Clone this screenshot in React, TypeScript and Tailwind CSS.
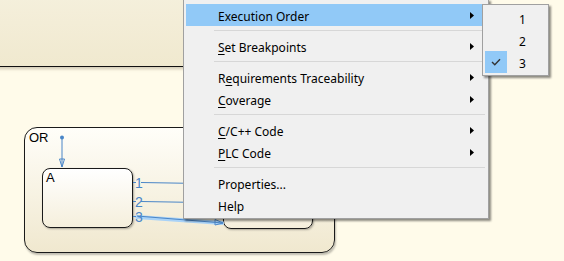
import React from "react";

const font = { fontFamily: '"Noto Sans", "Liberation Sans", sans-serif' };
const arial = { fontFamily: '"Liberation Sans", Arial, sans-serif' };

function Arrow() {
  return (
    <svg width="4" height="7" viewBox="0 0 4 7" className="block">
      <path d="M0 0 L4 3.5 L0 7 Z" fill="#000" />
    </svg>
  );
}

function Item({ children, sub, active }: { children: React.ReactNode; sub?: boolean; active?: boolean }) {
  return (
    <div
      className={`mx-[2px] h-[22px] flex items-center pl-[32px] pr-[12px] text-[12px] text-black ${active ? "bg-[#91c9f7]" : ""}`}
    >
      <span className="flex-1 leading-none mt-[3px]">{children}</span>
      {sub ? <Arrow /> : null}
    </div>
  );
}

function Sep() {
  return (
    <div className="py-[4px] pl-[30px] pr-[3px]">
      <div className="h-px bg-[#d7d7d7]" />
    </div>
  );
}

function U({ children }: { children: React.ReactNode }) {
  return <span className="underline underline-offset-2">{children}</span>;
}

function Label({ n, top }: { n: string; top: string }) {
  return (
    <div className={`absolute left-[135px] ${top} text-[14px] leading-[14px] text-[#4a86c8]`} style={arial}>
      {n}
    </div>
  );
}

export default function App() {
  return (
    <div className="relative w-[564px] h-[261px] overflow-hidden bg-[#fffbea]" style={font}>
      {/* top state box */}
      <div className="absolute left-[-20px] top-[-20px] w-[340px] h-[87px] border-b border-[#111] bg-gradient-to-b from-[#f6f1df] to-[#f0e9cf] shadow-[0_2px_3px_rgba(120,110,80,0.35)]" />

      {/* OR state */}
      <div className="absolute left-[24px] top-[127px] w-[311px] h-[126px] rounded-[13px] border border-[#1a1a1a] bg-gradient-to-b from-[#fffef9] to-[#f0e8cf] shadow-[1px_2px_2px_rgba(0,0,0,0.25)]">
        <div className="pl-[4px] pt-[3px] text-[13px] leading-[14px] text-black" style={arial}>
          OR
        </div>
      </div>

      {/* state A */}
      <div className="absolute left-[42px] top-[168px] w-[91px] h-[60px] rounded-[8px] border border-[#1a1a1a] bg-gradient-to-b from-[#ffffff] to-[#f5efdc] shadow-[1px_1px_2px_rgba(0,0,0,0.3)]">
        <div className="pl-[3px] pt-[2px] text-[13px] leading-[14px] text-black" style={arial}>
          A
        </div>
      </div>

      {/* state B */}
      <div className="absolute left-[223px] top-[170px] w-[90px] h-[59px] rounded-[8px] border border-[#1a1a1a] bg-gradient-to-b from-[#ffffff] to-[#f5efdc] shadow-[1px_1px_2px_rgba(0,0,0,0.3)]" />

      {/* transitions */}
      <svg className="absolute left-0 top-0" width="564" height="261" viewBox="0 0 564 261">
        <circle cx="62" cy="137.5" r="2" fill="#4a86c8" />
        <line x1="62" y1="137.5" x2="62" y2="167" stroke="#4a86c8" strokeWidth="1" />
        <path d="M59.5 159 L62 167 L64.5 159 Z" fill="none" stroke="#4a86c8" strokeWidth="1" />
        <path d="M137 217 L222 223" stroke="#a9d2f7" strokeWidth="4" strokeLinecap="round" />
        <line x1="141" y1="182.5" x2="230" y2="184" stroke="#4a86c8" strokeWidth="1" />
        <line x1="141" y1="201.5" x2="230" y2="203" stroke="#4a86c8" strokeWidth="1" />
        <line x1="137" y1="216" x2="223" y2="223" stroke="#4a86c8" strokeWidth="1" />
        <path d="M215 219.5 L223 223 L215 225 Z" fill="none" stroke="#4a86c8" strokeWidth="1" />
        <line x1="133" y1="182.5" x2="136" y2="182.5" stroke="#4a86c8" strokeWidth="1" />
        <line x1="133" y1="201.5" x2="136" y2="201.5" stroke="#4a86c8" strokeWidth="1" />
        <line x1="133" y1="216.5" x2="136" y2="216.5" stroke="#4a86c8" strokeWidth="1" />
      </svg>
      <Label n="1" top="top-[176px]" />
      <Label n="2" top="top-[195px]" />
      <Label n="3" top="top-[210px]" />

      {/* context menu */}
      <div className="absolute left-[183px] top-[-1px] w-[306px] border border-[#a0a0a0] bg-[#f0f0f0] pt-[4px] pb-[2px] shadow-[2px_2px_2px_rgba(0,0,0,0.45)]">
        <Item sub active>Execution Order</Item>
        <Sep />
        <Item sub><U>S</U>et Breakpoints</Item>
        <Sep />
        <Item sub>R<U>e</U>quirements Traceability</Item>
        <Item sub><U>C</U>overage</Item>
        <Sep />
        <Item sub><U>C</U>/C++ Code</Item>
        <Item sub><U>P</U>LC Code</Item>
        <Sep />
        <Item>Properties...</Item>
        <Item>Help</Item>
      </div>

      {/* submenu */}
      <div className="absolute left-[482px] top-[4px] w-[67px] border border-[#a0a0a0] bg-[#f0f0f0] py-[2px] shadow-[2px_2px_2px_rgba(0,0,0,0.45)]">
        {["1", "2", "3"].map((n) => (
          <div key={n} className="h-[22px] flex items-center pl-[2px]">
            <div className={`w-[22px] h-[22px] flex items-center justify-center ${n === "3" ? "bg-[#91c9f7]" : ""}`}>
              {n === "3" ? (
                <svg width="10" height="8" viewBox="0 0 10 8">
                  <path d="M1 4 L3.8 6.8 L9 1.2" fill="none" stroke="#333" strokeWidth="1.4" />
                </svg>
              ) : null}
            </div>
            <span className="ml-[12px] mt-[3px] text-[12px] leading-none text-black">{n}</span>
          </div>
        ))}
      </div>
    </div>
  );
}
